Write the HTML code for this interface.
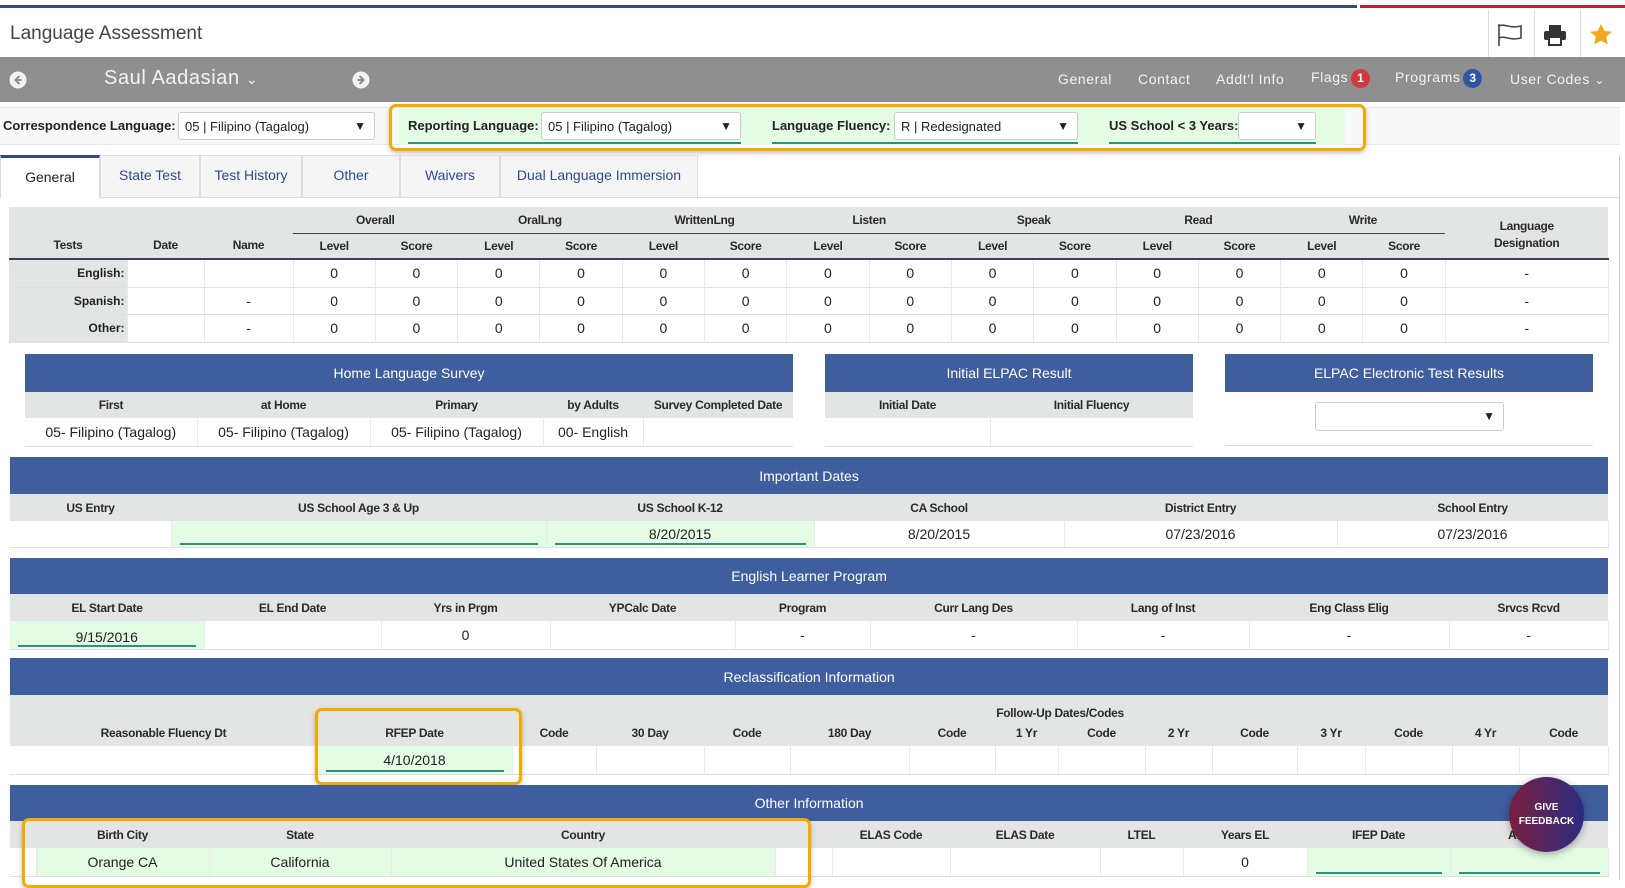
<!DOCTYPE html>
<html><head><meta charset="utf-8"><style>
*{box-sizing:border-box;margin:0;padding:0}
body{width:1625px;height:880px;overflow:hidden;background:#fff;font-family:"Liberation Sans",sans-serif;color:#222;position:relative}
.abs{position:absolute}
table{border-collapse:collapse;table-layout:fixed;width:100%}
td{text-align:center;overflow:hidden;white-space:nowrap;padding:0}
.hd{background:#3f5e9e;color:#fff;font-size:14px;text-align:center}
.sub td{background:#e3e4e4;font-size:12px;font-weight:bold;color:#2a2a2a;letter-spacing:-0.3px}
.dat td{background:#fff;font-size:14px;border-right:1px solid #e6eaee;border-bottom:1px solid #dde0e3}
.g{background:#e4fbe4 !important;position:relative}
.g:after{content:"";position:absolute;left:8px;right:8px;bottom:2px;height:2px;background:#2d9080}
.org{position:absolute;border:3px solid #f5aa00;border-radius:7px;box-shadow:0 2px 5px rgba(0,0,0,.25)}
.sel{position:absolute;background:#fff;border:1px solid #ccc;border-radius:3px;font-size:13px;padding:6px 0 0 6px;height:28px;color:#222}
.sel:after{content:"▼";position:absolute;right:8px;top:6px;font-size:12px}
.lbl{position:absolute;font-size:13px;font-weight:bold;top:118px}
.tab{position:absolute;top:155px;height:42px;background:#f5f5f5;border:1px solid #ddd;border-bottom:none;color:#2c4a8c;font-size:14px;text-align:center;line-height:38px}
.nav{position:absolute;top:71px;color:#f3f3f3;font-size:14px;letter-spacing:.6px}
.badge{display:inline-block;width:19px;height:19px;border-radius:50%;color:#fff;font-size:12px;font-weight:bold;text-align:center;line-height:19px;margin-left:3px}
</style></head><body>
<div class="abs" style="left:0;top:5px;width:1357px;height:3px;background:#2c4a8c"></div>
<div class="abs" style="left:1360px;top:5px;width:265px;height:3px;background:#c0202a"></div>
<div class="abs" style="left:10px;top:23px;font-size:19px;color:#444">Language Assessment</div>
<div class="abs" style="left:1488px;top:10px;width:1px;height:47px;background:#ddd"></div>
<div class="abs" style="left:1534px;top:10px;width:1px;height:47px;background:#ddd"></div>
<div class="abs" style="left:1580px;top:10px;width:1px;height:47px;background:#ddd"></div>
<svg class="abs" style="left:1497px;top:23px" width="26" height="24" viewBox="0 0 26 24"><path d="M2 1v22M2 3c6-3 10 3 22 0v12c-12 3-16-3-22 0" fill="none" stroke="#444" stroke-width="1.6"/></svg>
<svg class="abs" style="left:1543px;top:24px" width="24" height="22" viewBox="0 0 24 22"><rect x="6" y="1" width="12" height="6" fill="#333"/><rect x="1" y="7" width="22" height="9" rx="2" fill="#333"/><rect x="6" y="13" width="12" height="8" fill="#fff" stroke="#333" stroke-width="2"/></svg>
<svg class="abs" style="left:1589px;top:23px" width="24" height="24" viewBox="0 0 24 24"><path d="M12 1l3.3 7 7.6.8-5.7 5.1 1.6 7.5L12 17.6 5.2 21.4l1.6-7.5L1.1 8.8l7.6-.8z" fill="#f0a820"/></svg>
<div class="abs" style="left:0;top:57px;width:1625px;height:45px;background:#8f8f8f"></div>
<svg class="abs" style="left:9px;top:71px" width="18" height="18" viewBox="0 0 18 18"><circle cx="9" cy="9" r="8.5" fill="#f3f3f3"/><path d="M10.5 5L6.5 9l4 4M6.5 9h6" stroke="#8f8f8f" stroke-width="2" fill="none"/></svg>
<svg class="abs" style="left:352px;top:71px" width="18" height="18" viewBox="0 0 18 18"><circle cx="9" cy="9" r="8.5" fill="#f3f3f3"/><path d="M7.5 5l4 4-4 4M11.5 9h-6" stroke="#8f8f8f" stroke-width="2" fill="none"/></svg>
<div class="abs" style="left:104px;top:67px;font-size:20px;color:#f3f3f3;letter-spacing:.6px">Saul Aadasian <span style="font-size:14px">&#8964;</span></div>
<div class="nav" style="left:1058px">General</div>
<div class="nav" style="left:1138px">Contact</div>
<div class="nav" style="left:1216px">Addt'l Info</div>
<div class="nav" style="left:1311px;top:69px">Flags<span class="badge" style="background:#d0393e">1</span></div>
<div class="nav" style="left:1395px;top:69px">Programs<span class="badge" style="background:#2f55a4">3</span></div>
<div class="nav" style="left:1510px">User Codes <span style="font-size:12px">&#8964;</span></div>
<div class="abs" style="left:0;top:107px;width:1620px;height:38px;background:#f8f8f8;border-top:1px solid #e6e6e6;border-bottom:1px solid #e6e6e6"></div>
<div class="abs" style="left:399px;top:108px;width:946px;height:37px;background:#e4fbe4"></div>
<div class="lbl" style="left:3px">Correspondence Language:</div>
<div class="sel" style="left:178px;top:112px;width:197px">05 | Filipino (Tagalog)</div>
<div class="lbl" style="left:408px">Reporting Language:</div>
<div class="sel" style="left:541px;top:112px;width:200px">05 | Filipino (Tagalog)</div>
<div class="abs" style="left:408px;top:142px;width:333px;height:2px;background:#2d9080"></div>
<div class="lbl" style="left:772px">Language Fluency:</div>
<div class="sel" style="left:894px;top:112px;width:184px">R | Redesignated</div>
<div class="abs" style="left:772px;top:142px;width:306px;height:2px;background:#2d9080"></div>
<div class="lbl" style="left:1109px">US School &lt; 3 Years:</div>
<div class="sel" style="left:1238px;top:112px;width:78px"></div>
<div class="abs" style="left:1109px;top:142px;width:207px;height:2px;background:#2d9080"></div>
<div class="org" style="left:389px;top:104px;width:977px;height:47px"></div>
<div class="abs" style="left:0;top:197px;width:1620px;height:1px;background:#ddd"></div>
<div class="abs" style="left:1619px;top:155px;width:1px;height:725px;background:#ccc"></div>
<div class="tab" style="left:0;width:100px;background:#fff;border-top:3px solid #2c4a8c;color:#222;height:43px">General</div>
<div class="tab" style="left:100px;width:100px">State Test</div>
<div class="tab" style="left:200px;width:102px">Test History</div>
<div class="tab" style="left:302px;width:98px">Other</div>
<div class="tab" style="left:400px;width:100px">Waivers</div>
<div class="tab" style="left:500px;width:198px">Dual Language Immersion</div>

<div class="abs" style="left:9px;top:207px;width:1599px">
<table>
<colgroup><col style="width:118px"><col style="width:77px"><col style="width:89px"><col span="14" style="width:82.3px"><col style="width:163px"></colgroup>
<tr class="sub" style="height:26px"><td rowspan="2" style="vertical-align:bottom;padding-bottom:6px;border-bottom:2px solid #3c4250">Tests</td><td rowspan="2" style="vertical-align:bottom;padding-bottom:6px;border-bottom:2px solid #3c4250">Date</td><td rowspan="2" style="vertical-align:bottom;padding-bottom:6px;border-bottom:2px solid #3c4250">Name</td>
<td colspan="2" style="border-bottom:1px solid #3c4250">Overall</td><td colspan="2" style="border-bottom:1px solid #3c4250">OralLng</td><td colspan="2" style="border-bottom:1px solid #3c4250">WrittenLng</td><td colspan="2" style="border-bottom:1px solid #3c4250">Listen</td><td colspan="2" style="border-bottom:1px solid #3c4250">Speak</td><td colspan="2" style="border-bottom:1px solid #3c4250">Read</td><td colspan="2" style="border-bottom:1px solid #3c4250">Write</td><td rowspan="2" style="border-bottom:2px solid #3c4250;white-space:normal;line-height:17px;padding-top:4px">Language<br>Designation</td></tr>
<tr class="sub" style="height:26px"><td style="border-bottom:2px solid #3c4250">Level</td><td style="border-bottom:2px solid #3c4250">Score</td><td style="border-bottom:2px solid #3c4250">Level</td><td style="border-bottom:2px solid #3c4250">Score</td><td style="border-bottom:2px solid #3c4250">Level</td><td style="border-bottom:2px solid #3c4250">Score</td><td style="border-bottom:2px solid #3c4250">Level</td><td style="border-bottom:2px solid #3c4250">Score</td><td style="border-bottom:2px solid #3c4250">Level</td><td style="border-bottom:2px solid #3c4250">Score</td><td style="border-bottom:2px solid #3c4250">Level</td><td style="border-bottom:2px solid #3c4250">Score</td><td style="border-bottom:2px solid #3c4250">Level</td><td style="border-bottom:2px solid #3c4250">Score</td></tr>
<tr class="dat" style="height:28px"><td style="background:#e3e4e4;text-align:right;font-size:12px;font-weight:bold;padding-right:2px">English:</td><td></td><td></td><td>0</td><td>0</td><td>0</td><td>0</td><td>0</td><td>0</td><td>0</td><td>0</td><td>0</td><td>0</td><td>0</td><td>0</td><td>0</td><td>0</td><td>-</td></tr>
<tr class="dat" style="height:27px"><td style="background:#e3e4e4;text-align:right;font-size:12px;font-weight:bold;padding-right:2px">Spanish:</td><td></td><td>-</td><td>0</td><td>0</td><td>0</td><td>0</td><td>0</td><td>0</td><td>0</td><td>0</td><td>0</td><td>0</td><td>0</td><td>0</td><td>0</td><td>0</td><td>-</td></tr>
<tr class="dat" style="height:28px"><td style="background:#e3e4e4;text-align:right;font-size:12px;font-weight:bold;padding-right:2px">Other:</td><td></td><td>-</td><td>0</td><td>0</td><td>0</td><td>0</td><td>0</td><td>0</td><td>0</td><td>0</td><td>0</td><td>0</td><td>0</td><td>0</td><td>0</td><td>0</td><td>-</td></tr>
</table></div>

<div class="abs" style="left:25px;top:354px;width:768px">
<table><colgroup><col style="width:172px"><col style="width:173px"><col style="width:173px"><col style="width:100px"><col style="width:150px"></colgroup>
<tr style="height:38px"><td colspan="5" class="hd">Home Language Survey</td></tr>
<tr class="sub" style="height:26px"><td>First</td><td>at Home</td><td>Primary</td><td>by Adults</td><td>Survey Completed Date</td></tr>
<tr class="dat" style="height:28px"><td>05- Filipino (Tagalog)</td><td>05- Filipino (Tagalog)</td><td>05- Filipino (Tagalog)</td><td>00- English</td><td style="border-right:none"></td></tr>
</table></div>
<div class="abs" style="left:825px;top:354px;width:368px">
<table><colgroup><col style="width:165px"><col style="width:203px"></colgroup>
<tr style="height:38px"><td colspan="2" class="hd">Initial ELPAC Result</td></tr>
<tr class="sub" style="height:26px"><td>Initial Date</td><td>Initial Fluency</td></tr>
<tr class="dat" style="height:28px"><td></td><td style="border-right:none"></td></tr>
</table></div>
<div class="abs" style="left:1225px;top:354px;width:368px">
<div class="hd" style="height:38px;line-height:38px">ELPAC Electronic Test Results</div>
<div style="height:54px;border-bottom:1px solid #dde0e3;position:relative">
<div class="sel" style="left:90px;top:10px;width:189px;height:29px"></div></div></div>

<div class="abs" style="left:10px;top:457px;width:1598px">
<table><colgroup><col style="width:161px"><col style="width:375px"><col style="width:268px"><col style="width:250px"><col style="width:273px"><col style="width:271px"></colgroup>
<tr style="height:37px"><td colspan="6" class="hd">Important Dates</td></tr>
<tr class="sub" style="height:27px"><td>US Entry</td><td>US School Age 3 &amp; Up</td><td>US School K-12</td><td>CA School</td><td>District Entry</td><td>School Entry</td></tr>
<tr class="dat" style="height:26px"><td></td><td class="g"></td><td class="g">8/20/2015</td><td>8/20/2015</td><td>07/23/2016</td><td>07/23/2016</td></tr>
</table></div>

<div class="abs" style="left:10px;top:558px;width:1598px">
<table><colgroup><col style="width:194px"><col style="width:177px"><col style="width:169px"><col style="width:185px"><col style="width:135px"><col style="width:207px"><col style="width:172px"><col style="width:200px"><col style="width:159px"></colgroup>
<tr style="height:36px"><td colspan="9" class="hd">English Learner Program</td></tr>
<tr class="sub" style="height:27px"><td>EL Start Date</td><td>EL End Date</td><td>Yrs in Prgm</td><td>YPCalc Date</td><td>Program</td><td>Curr Lang Des</td><td>Lang of Inst</td><td>Eng Class Elig</td><td>Srvcs Rcvd</td></tr>
<tr class="dat" style="height:28px"><td class="g" style="padding-top:4px">9/15/2016</td><td></td><td>0</td><td></td><td>-</td><td>-</td><td>-</td><td>-</td><td>-</td></tr>
</table></div>

<div class="abs" style="left:10px;top:658px;width:1598px">
<table><colgroup><col style="width:307px"><col style="width:195px"><col style="width:84px"><col style="width:108px"><col style="width:86px"><col style="width:119px"><col style="width:86px"><col style="width:63px"><col style="width:87px"><col style="width:67px"><col style="width:85px"><col style="width:68px"><col style="width:87px"><col style="width:67px"><col style="width:89px"></colgroup>
<tr style="height:37px"><td colspan="15" class="hd">Reclassification Information</td></tr>
<tr class="sub" style="height:25px"><td></td><td></td><td colspan="13" style="vertical-align:bottom">Follow-Up Dates/Codes</td></tr>
<tr class="sub" style="height:26px"><td>Reasonable Fluency Dt</td><td>RFEP Date</td><td>Code</td><td>30 Day</td><td>Code</td><td>180 Day</td><td>Code</td><td>1 Yr</td><td>Code</td><td>2 Yr</td><td>Code</td><td>3 Yr</td><td>Code</td><td>4 Yr</td><td>Code</td></tr>
<tr class="dat" style="height:28px"><td></td><td class="g">4/10/2018</td><td></td><td></td><td></td><td></td><td></td><td></td><td></td><td></td><td></td><td></td><td></td><td></td><td></td></tr>
</table></div>
<div class="org" style="left:315px;top:708px;width:207px;height:77px"></div>

<div class="abs" style="left:10px;top:785px;width:1598px">
<table><colgroup><col style="width:26px"><col style="width:173px"><col style="width:182px"><col style="width:384px"><col style="width:57px"><col style="width:118px"><col style="width:150px"><col style="width:83px"><col style="width:124px"><col style="width:143px"><col style="width:158px"></colgroup>
<tr style="height:36px"><td colspan="11" class="hd">Other Information</td></tr>
<tr class="sub" style="height:27px"><td></td><td>Birth City</td><td>State</td><td>Country</td><td></td><td>ELAS Code</td><td>ELAS Date</td><td>LTEL</td><td>Years EL</td><td>IFEP Date</td><td style="text-align:left;padding-left:58px">AD</td></tr>
<tr class="dat" style="height:28px"><td></td><td style="background:#e4fbe4">Orange CA</td><td style="background:#e4fbe4">California</td><td style="background:#e4fbe4">United States Of America</td><td></td><td></td><td></td><td></td><td>0</td><td class="g"></td><td class="g"></td></tr>
</table></div>
<div class="org" style="left:22px;top:818px;width:789px;height:70px"></div>
<div class="abs" style="left:1509px;top:777px;width:75px;height:75px;border-radius:50%;background:linear-gradient(90deg,#7a2040,#2b2b80);box-shadow:0 2px 8px rgba(0,0,0,.35);color:#fff;font-size:10px;font-weight:bold;text-align:center;padding-top:24px;line-height:14px">GIVE<br>FEEDBACK</div>
</body></html>
